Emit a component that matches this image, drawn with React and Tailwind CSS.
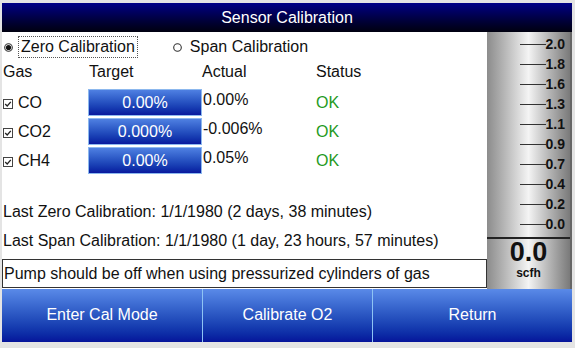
import React from 'react';

const font = { fontFamily: '"Liberation Sans", Arial, sans-serif' };

const gases = [
  { name: 'CO', target: '0.00%', actual: '0.00%', status: 'OK' },
  { name: 'CO2', target: '0.000%', actual: '-0.006%', status: 'OK' },
  { name: 'CH4', target: '0.00%', actual: '0.05%', status: 'OK' },
];

const ticks = ['2.0', '1.8', '1.6', '1.3', '1.1', '0.9', '0.7', '0.4', '0.2', '0.0'];

const CheckBox = () => (
  <svg width="10" height="10" viewBox="0 0 10 10" className="shrink-0">
    <rect x="0.5" y="0.5" width="9" height="9" fill="#fff" stroke="#444" />
    <path d="M2.2 5 L4.2 7 L7.8 2.8" fill="none" stroke="#222" strokeWidth="1.3" />
  </svg>
);

const Radio = ({ on }) => (
  <svg width="9" height="9" viewBox="0 0 9 9" className="shrink-0">
    <circle cx="4.5" cy="4.5" r="3.8" fill="#fff" stroke="#333" strokeWidth="1.1" />
    {on && <circle cx="4.5" cy="4.5" r="2.6" fill="#111" />}
  </svg>
);

export default function App() {
  return (
    <div className="w-[575px] h-[348px] bg-[#e4e4e4] overflow-hidden" style={font}>
      <div className="ml-[2px] mt-[3px] w-[570px] h-[339px] flex flex-col bg-white">
        {/* title */}
        <div className="h-[29px] flex items-center justify-center bg-gradient-to-b from-[#000088] to-[#000010] text-white text-[16px]">
          Sensor Calibration
        </div>

        <div className="flex h-[257px]">
          {/* left */}
          <div className="w-[485px] flex flex-col text-[16px] text-[#111]">
            <div className="h-[30px] flex items-center">
              <div className="pl-[2px] flex items-center">
                <Radio on />
                <span className="ml-[5px] px-[2px] border border-dotted border-[#555] leading-[20px]">Zero Calibration</span>
              </div>
              <div className="ml-[35px] flex items-center">
                <Radio />
                <span className="ml-[8px] leading-[20px]">Span Calibration</span>
              </div>
            </div>

            <div className="h-[20px] flex items-center leading-none">
              <span className="w-[86px] pl-[1px]">Gas</span>
              <span className="w-[114px] pl-[1px]">Target</span>
              <span className="w-[114px]">Actual</span>
              <span>Status</span>
            </div>

            <div className="mt-[7px] flex flex-col gap-[2px]">
              {gases.map((g) => (
                <div key={g.name} className="h-[27px] flex">
                  <div className="w-[86px] pl-[1px] flex items-center">
                    <div className="mt-[3px]"><CheckBox /></div>
                    <span className="ml-[5px] mt-[1px]">{g.name}</span>
                  </div>
                  <div className="w-[114px] h-[27px] flex items-center justify-center border border-[#8cb8ee] bg-gradient-to-b from-[#4f80e2] to-[#0a189e] text-white">
                    {g.target}
                  </div>
                  <span className="w-[114px] pl-[1px] leading-[22px]">{g.actual}</span>
                  <span className="mt-[3px] leading-[22px] text-[#1f9a1f]">{g.status}</span>
                </div>
              ))}
            </div>

            <div className="mt-[28px] pl-[1px] leading-[20px]">Last Zero Calibration: 1/1/1980 (2 days, 38 minutes)</div>
            <div className="mt-[9px] pl-[1px] leading-[20px]">Last Span Calibration: 1/1/1980 (1 day, 23 hours, 57 minutes)</div>

            <div className="mt-auto h-[29px] border border-[#333] flex items-center pl-[1px] mb-[1px]">
              Pump should be off when using pressurized cylinders of gas
            </div>
          </div>

          {/* gauge */}
          <div className="w-[85px] flex flex-col border-r-2 border-[#666] bg-gradient-to-r from-[#8c8c8c] via-[#f4f4f4] to-[#7a7a7a]">
            <div className="h-[205px] pt-[2px] flex flex-col">
              {ticks.map((t) => (
                <div key={t} className="h-[20px] flex items-center justify-end pr-[5px]">
                  <div className="w-[26px] h-[1px] bg-[#333]" />
                  <span className="text-[14px] font-bold text-[#111] leading-none">{t}</span>
                </div>
              ))}
            </div>
            <div className="h-[2px] bg-[#222]" />
            <div className="flex-1 flex flex-col items-center">
              <span className="text-[27px] font-bold leading-[27px] text-[#111]">0.0</span>
              <span className="mt-[1px] text-[12px] font-bold leading-[12px] text-[#111]">scfh</span>
            </div>
          </div>
        </div>

        {/* bottom buttons */}
        <div className="flex-1 flex bg-[#8ec4f4]">
          <button className="w-[200px] pb-[2px] flex items-center justify-center bg-gradient-to-b from-[#5a8ae8] to-[#07139a] text-white text-[16px]">Enter Cal Mode</button>
          <button className="ml-[1px] w-[169px] pb-[2px] flex items-center justify-center bg-gradient-to-b from-[#5a8ae8] to-[#07139a] text-white text-[16px]">Calibrate O2</button>
          <button className="ml-[1px] flex-1 pb-[2px] flex items-center justify-center bg-gradient-to-b from-[#5a8ae8] to-[#07139a] text-white text-[16px]">Return</button>
        </div>
      </div>
    </div>
  );
}
